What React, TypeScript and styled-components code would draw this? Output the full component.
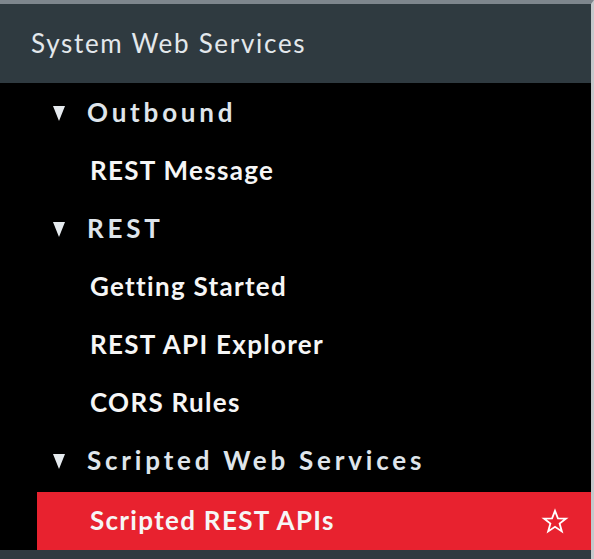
import React from 'react';
import styled, { createGlobalStyle } from 'styled-components';

const GlobalStyle = createGlobalStyle`
  html, body {
    margin: 0;
    padding: 0;
    background: #2f3a40;
  }
  body {
    font-family: Lato, "Liberation Sans", sans-serif;
  }
`;

const Panel = styled.div`
  width: 594px;
  height: 559px;
  display: flex;
  flex-direction: column;
  background: #2f3a40;
  border-top: 4px solid #7e868d;
  border-right: 3px solid #c5c9cc;
  box-sizing: border-box;
  overflow: hidden;
`;

const Header = styled.div`
  height: 79px;
  flex: none;
  display: flex;
  align-items: center;
  padding-left: 31px;
  padding-bottom: 2px;
  box-sizing: border-box;
  color: #e3e8ec;
  font-size: 26px;
  letter-spacing: 1.7px;
`;

const List = styled.ul`
  list-style: none;
  margin: 0;
  padding: 3px 0 0;
  background: #000;
  flex: none;
  height: 467px;
  box-sizing: border-box;
`;

const SectionRow = styled.li`
  height: 58px;
  display: flex;
  align-items: center;
  gap: 22px;
  padding-left: 53px;
  padding-bottom: 6px;
  box-sizing: border-box;
  color: #dfe5eb;
  font-size: 26px;
  font-weight: 700;
  letter-spacing: 3.8px;
`;

const Caret = styled.span`
  width: 0;
  height: 0;
  border-left: 6.5px solid transparent;
  border-right: 6.5px solid transparent;
  border-top: 15px solid #e6ebef;
  margin-top: 2px;
`;

const ItemRow = styled.li<{ $active?: boolean }>`
  height: 58px;
  display: flex;
  align-items: center;
  justify-content: space-between;
  margin-left: ${(p) => (p.$active ? '37px' : '0')};
  padding-left: ${(p) => (p.$active ? '53px' : '90px')};
  padding-right: 22px;
  padding-bottom: ${(p) => (p.$active ? '2px' : '6px')};
  box-sizing: border-box;
  background: ${(p) => (p.$active ? '#e8222f' : 'transparent')};
  color: #f6f6f6;
  font-size: 26px;
  font-weight: 700;
  letter-spacing: 1.3px;
`;

const StarIcon = styled.svg`
  margin-top: 2px;
`;

const Star = () => (
  <StarIcon width="28" height="27" viewBox="0 0 24 24" fill="none" stroke="#fff" strokeWidth="1.6" strokeLinejoin="miter">
    <polygon points="12,2.5 14.6,9.2 21.8,9.4 16.1,13.8 18.1,20.8 12,16.7 5.9,20.8 7.9,13.8 2.2,9.4 9.4,9.2" />
  </StarIcon>
);

type Entry = { type: 'section' | 'item'; label: string; active?: boolean };

const entries: Entry[] = [
  { type: 'section', label: 'Outbound' },
  { type: 'item', label: 'REST Message' },
  { type: 'section', label: 'REST' },
  { type: 'item', label: 'Getting Started' },
  { type: 'item', label: 'REST API Explorer' },
  { type: 'item', label: 'CORS Rules' },
  { type: 'section', label: 'Scripted Web Services' },
  { type: 'item', label: 'Scripted REST APIs', active: true },
];

function App() {
  return (
    <>
      <GlobalStyle />
      <Panel>
        <Header>System Web Services</Header>
        <List>
          {entries.map((entry) =>
            entry.type === 'section' ? (
              <SectionRow key={entry.label}>
                <Caret />
                {entry.label}
              </SectionRow>
            ) : (
              <ItemRow key={entry.label} $active={entry.active}>
                {entry.label}
                {entry.active && <Star />}
              </ItemRow>
            ),
          )}
        </List>
      </Panel>
    </>
  );
}

export default App;
